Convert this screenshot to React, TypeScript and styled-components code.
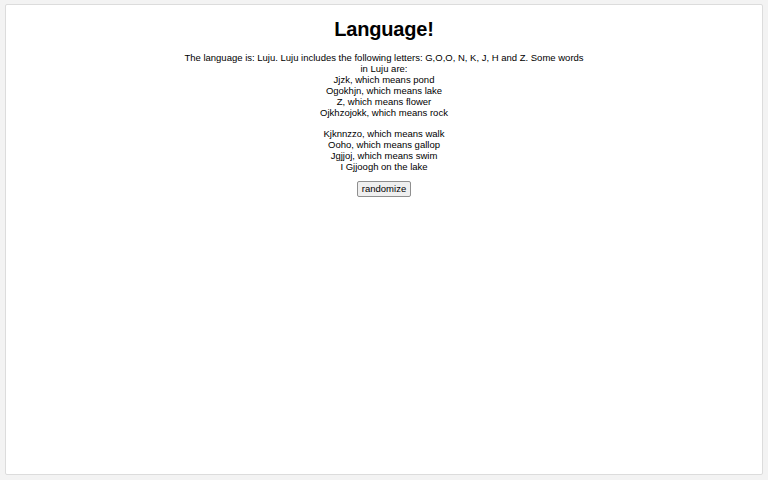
import React, { useState } from 'react';
import styled, { createGlobalStyle } from 'styled-components';

const GlobalStyle = createGlobalStyle`
  html, body {
    margin: 0;
    padding: 0;
    background: #f3f3f3;
  }
  body {
    padding: 4px 5px 5px 5px;
    box-sizing: border-box;
    height: 480px;
  }
  #root {
    height: 100%;
  }
`;

const Card = styled.div`
  box-sizing: border-box;
  height: 100%;
  background: #ffffff;
  border: 1px solid #dcdcdc;
  border-radius: 2px;
  font-family: 'Liberation Sans', Arial, sans-serif;
  color: #000;
  display: flex;
  flex-direction: column;
  align-items: center;
`;

const Title = styled.h1`
  margin: 13px 0 11px 0;
  font-size: 20px;
  font-weight: bold;
  line-height: 23px;
  letter-spacing: -0.2px;
`;

const Description = styled.div`
  width: 408px;
  text-align: center;
  font-size: 9.5px;
  line-height: 11px;
`;

const Line = styled.div<{ $gap?: boolean }>`
  margin-top: ${(p) => (p.$gap ? '10px' : '0')};
`;

const RandomizeButton = styled.button`
  margin-top: 9px;
  font-family: 'Liberation Sans', Arial, sans-serif;
  font-size: 9.5px;
  line-height: 12px;
  padding: 1px 4px;
  background: #efefef;
  border: 1px solid #8f8f8f;
  border-radius: 2px;
  color: #000;
`;

const words = [
  'Jjzk, which means pond',
  'Ogokhjn, which means lake',
  'Z, which means flower',
  'Ojkhzojokk, which means rock',
];

const verbs = [
  'Kjknnzzo, which means walk',
  'Ooho, which means gallop',
  'Jgjjoj, which means swim',
  'I Gjjoogh on the lake',
];

const App: React.FC = () => {
  const [seed, setSeed] = useState(0);

  return (
    <>
      <GlobalStyle />
      <Card key={seed}>
        <Title>Language!</Title>
        <Description>
          <Line>
            The language is: Luju. Luju includes the following letters: G,O,O, N, K, J, H
            and Z. Some words in Luju are:
          </Line>
          {words.map((w) => (
            <Line key={w}>{w}</Line>
          ))}
          {verbs.map((v, i) => (
            <Line key={v} $gap={i === 0}>
              {v}
            </Line>
          ))}
        </Description>
        <RandomizeButton onClick={() => setSeed(seed + 1)}>randomize</RandomizeButton>
      </Card>
    </>
  );
};

export default App;
